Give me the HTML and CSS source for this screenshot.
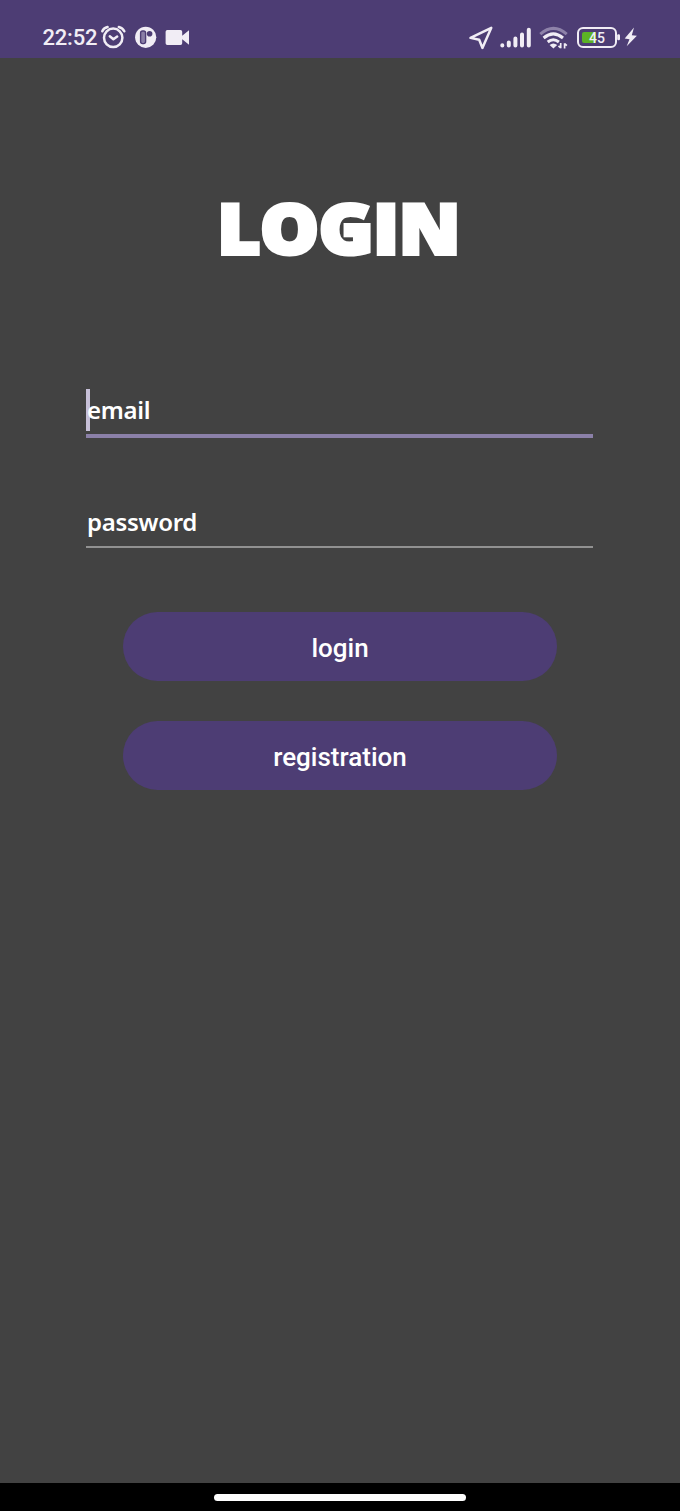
FILE: index.html
```html
<!DOCTYPE html>
<html lang="en">
<head>
<meta charset="utf-8">
<title>Login</title>
<link rel="stylesheet" href="styles.css">
</head>
<body>
<header class="status">
  <span class="time">22:52</span>
  <svg class="icons-left" width="92" height="30" viewBox="100 22 92 30">
    <g fill="none" stroke="#f1edf5" stroke-width="2.5" stroke-linecap="round">
      <circle cx="113.2" cy="37.8" r="9.2"/>
      <path d="M102.3 31.3Q103.5 28 107.6 27M118.8 27Q122.7 28 124.3 31.3"/>
      <path d="M109.8 36.3l3.6 3 3.8-2.7" stroke-linejoin="round"/>
    </g>
    <circle cx="145.7" cy="37.3" r="10.6" fill="#f1edf5"/>
    <rect x="140.6" y="31" width="5" height="12.6" rx="2" fill="#8a7ea6" stroke="#4d3d74" stroke-width="1.4"/>
    <circle cx="149.6" cy="33.8" r="2.8" fill="#4d3d74"/>
    <path d="M167.3 30h13.2q1.7 0 1.7 1.7v4l6.8-5.5v14.6l-6.8-5.5v4q0 1.7-1.7 1.7h-13.2q-1.7 0-1.7-1.7v-11.6q0-1.7 1.7-1.7z" fill="#f1edf5"/>
  </svg>
  <svg class="icons-right" width="102" height="30" viewBox="466 22 102 30">
    <path d="M491.3 27.8L470.5 37.9l8.7 1.9 3.2 8.1z" fill="none" stroke="#f1edf5" stroke-width="2.5" stroke-linejoin="round"/>
    <g stroke="#f1edf5" stroke-width="4" stroke-linecap="round">
      <path d="M502.3 45.2v.2M508.8 42.5v2.9M515.4 38.6v6.8M522 34.4v11M528.8 29.8v15.6"/>
    </g>
    <g fill="none" stroke="#f1edf5" stroke-width="3">
      <path d="M540.3 34.2Q553.5 22.6 566.7 34.2" stroke="#8e82a9"/>
      <path d="M543.6 38Q553.3 29.7 563 38M547.7 42Q553.3 37.4 558.9 42"/>
    </g>
    <path d="M549.6 45q3.8-3.2 7.6 0l-3.8 3.4z" fill="#f1edf5"/>
    <path d="M560.7 43v5.2M558.5 45.8l2.2 2.2M564.6 48.5v-5.2M564.6 43.5l2.2 2.2" fill="none" stroke="#f1edf5" stroke-width="1.7"/>
  </svg>
  <span class="battery"><span class="charge"></span><span class="level">45</span></span>
  <svg class="power" width="22" height="26" viewBox="617 25 22 26" fill="#f1edf5">
    <rect x="617.2" y="34.3" width="2.8" height="6" rx="1.2"/>
    <path d="M634 27.6L624.7 38.6l4.8.6-2.8 7.1 10.2-10.5-5.1-.6z"/>
  </svg>
</header>
<main class="screen">
  <h1 class="title">LOGIN</h1>
  <div class="field focused"><span class="caret"></span>email</div>
  <div class="field">password</div>
  <button class="btn">login</button>
  <button class="btn">registration</button>
</main>
<footer class="nav"><span class="pill"></span></footer>
</body>
</html>
```
FILE: styles.css
```css
* { box-sizing: border-box; }
body {
  margin: 0;
  height: 1511px;
  display: flex;
  flex-direction: column;
  background: #424242;
  color: #fff;
  font-family: Roboto, sans-serif;
}
.status {
  height: 58px;
  flex: none;
  background: #4d3d74;
  display: flex;
  align-items: flex-start;
  padding-left: 42px;
  color: #f1edf5;
}
.time {
  width: 58px;
  margin-top: 24px;
  font-size: 22px;
  line-height: 28px;
  font-weight: 500;
  letter-spacing: -0.2px;
  text-indent: 0.5px;
  white-space: nowrap;
}
.icons-left { margin-top: 22px; flex: none; }
.icons-right { margin: 22px 0 0 274px; flex: none; }
.battery {
  position: relative;
  flex: none;
  width: 40px;
  height: 21px;
  margin: 27px 0 0 9px;
  border: 2.5px solid #f1edf5;
  border-radius: 6px;
  padding: 3px;
}
.charge {
  display: block;
  width: 14px;
  height: 11px;
  background: #5cb226;
  border-radius: 2px 0 0 2px;
}
.level {
  position: absolute;
  inset: 0;
  text-align: center;
  font-size: 14px;
  line-height: 18px;
  font-weight: 500;
}
.power { margin-top: 25px; flex: none; }
.screen {
  flex: 1;
  display: flex;
  flex-direction: column;
  align-items: center;
}
.title {
  margin: 129px 2px 3px 0;
  height: 80px;
  font-family: "Open Sans", sans-serif;
  font-weight: 800;
  font-size: 69px;
  line-height: 80px;
  transform: scaleX(1.065);
  -webkit-text-stroke: 4px #fff;
}
.field {
  position: relative;
  width: 507px;
  height: 60px;
  margin: 50px 0 0 -1px;
  padding-left: 1px;
  border-bottom: 2px solid #919191;
  font-family: "Noto Sans", sans-serif;
  font-weight: 600;
  font-size: 24px;
  letter-spacing: -0.3px;
  line-height: 68px;
}
.field.focused {
  height: 62px;
  margin-top: 106px;
  border-bottom: 4px solid #8b80a8;
}
.caret {
  position: absolute;
  left: 0;
  top: 13px;
  width: 4px;
  height: 42px;
  background: #c7c0d8;
  z-index: -1;
}
.btn {
  width: 434px;
  height: 69px;
  margin: 64px 0 0;
  padding: 2px 0 0;
  border: 0;
  border-radius: 35px;
  background: #4d3d74;
  color: #fff;
  font: 500 26px Roboto, sans-serif;
}
.btn + .btn { margin-top: 40px; }
.nav {
  height: 28px;
  flex: none;
  background: #000;
  display: flex;
  justify-content: center;
  align-items: center;
}
.pill {
  width: 252px;
  height: 7px;
  border-radius: 4px;
  background: #fff;
}
```
